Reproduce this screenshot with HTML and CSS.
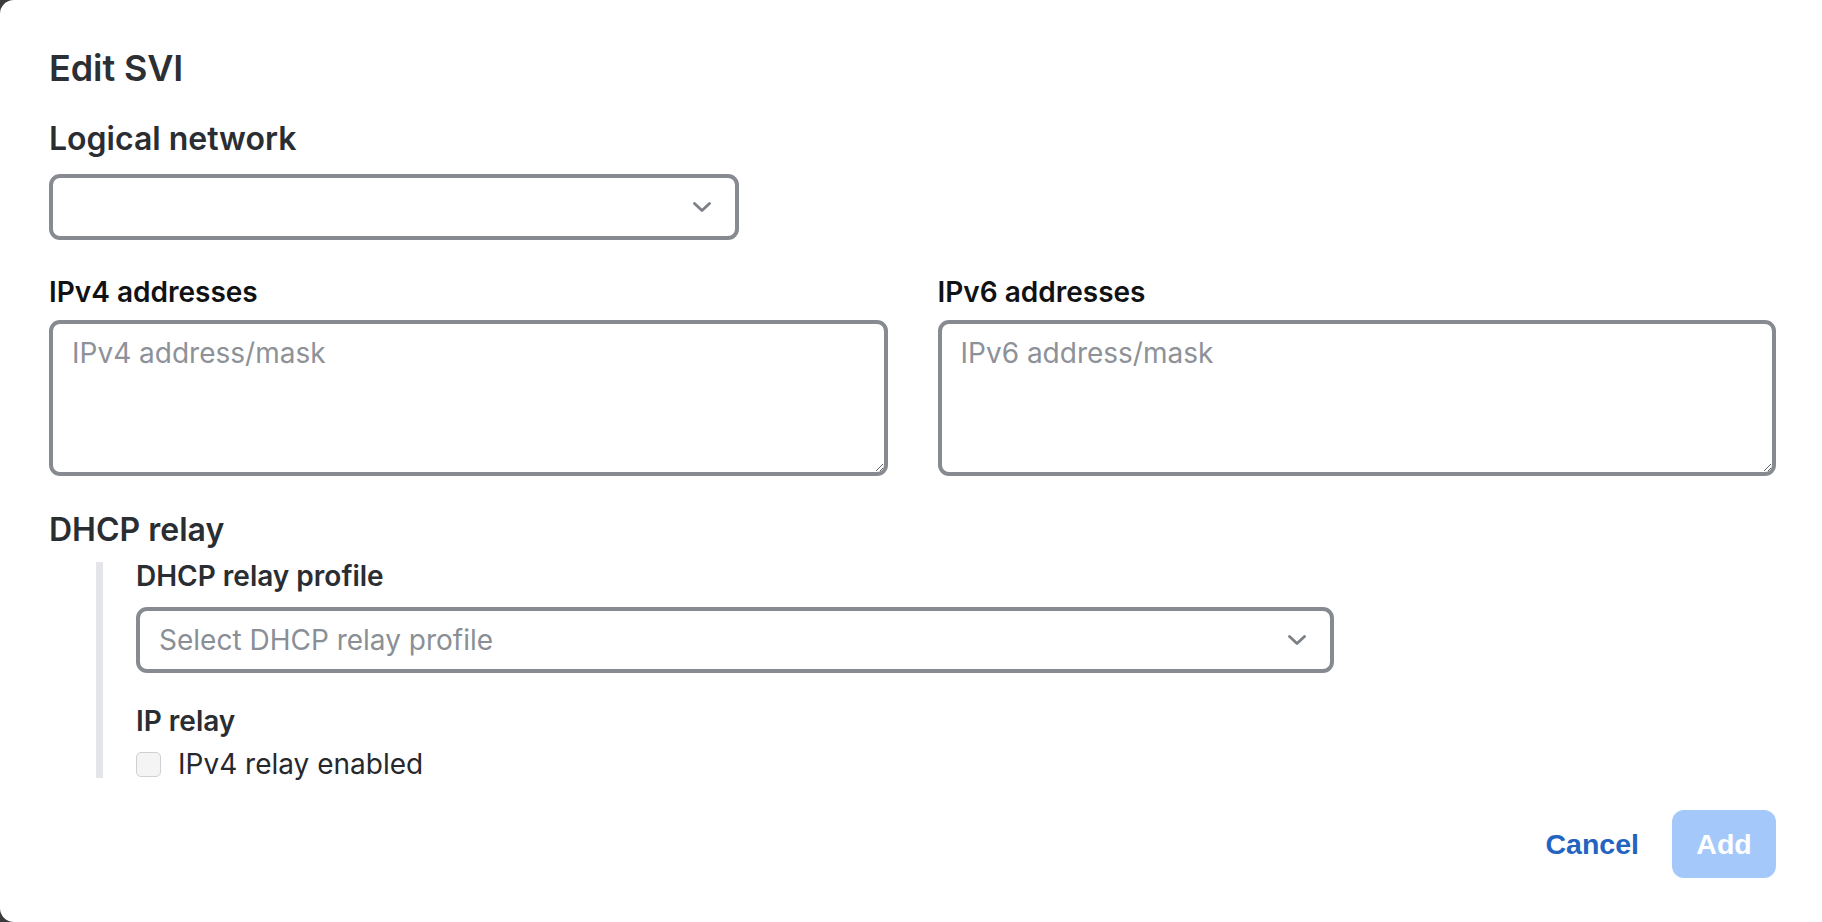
FILE: index.html
```html
<!DOCTYPE html>
<html lang="en">
<head>
<meta charset="utf-8">
<title>Edit SVI</title>
<link rel="stylesheet" href="styles.css">
</head>
<body>
<div class="dialog">
  <h1 class="title">Edit SVI</h1>

  <div class="section-label">Logical network</div>
  <div class="select select-short">
    <span class="select-value"></span>
    <svg class="chev" width="18" height="10" viewBox="0 0 18 10"><path d="M1.5 1.5 L9 8.5 L16.5 1.5" fill="none" stroke="#7b8087" stroke-width="2.8" stroke-linecap="round" stroke-linejoin="round"/></svg>
  </div>

  <div class="addr-grid">
    <div class="addr-col">
      <label class="field-label" for="v4">IPv4 addresses</label>
      <textarea id="v4" class="addr-input" placeholder="IPv4 address/mask"></textarea>
    </div>
    <div class="addr-col">
      <label class="field-label" for="v6">IPv6 addresses</label>
      <textarea id="v6" class="addr-input" placeholder="IPv6 address/mask"></textarea>
    </div>
  </div>

  <div class="section-label dhcp-heading">DHCP relay</div>
  <div class="nested">
    <div class="sub-label first">DHCP relay profile</div>
    <div class="select select-long">
      <span class="select-placeholder">Select DHCP relay profile</span>
      <svg class="chev" width="18" height="10" viewBox="0 0 18 10"><path d="M1.5 1.5 L9 8.5 L16.5 1.5" fill="none" stroke="#7b8087" stroke-width="2.8" stroke-linecap="round" stroke-linejoin="round"/></svg>
    </div>
    <div class="sub-label ip-relay">IP relay</div>
    <label class="check-row">
      <span class="checkbox"></span>
      <span class="check-text">IPv4 relay enabled</span>
    </label>
  </div>

  <div class="footer">
    <button class="btn-cancel" type="button">Cancel</button>
    <button class="btn-add" type="button">Add</button>
  </div>
</div>
</body>
</html>
```

FILE: styles.css
```css
* { box-sizing: border-box; }
html, body { margin: 0; padding: 0; }
body {
  background: #3a3b3d;
  width: 1822px;
  height: 922px;
  overflow: hidden;
  font-family: Inter, "Noto Sans", sans-serif;
}
.dialog {
  background: #ffffff;
  width: 1822px;
  height: 922px;
  padding: 46px 46px 0 49px;
  border-top-left-radius: 14px;
  border-bottom-left-radius: 14px;
}
.title {
  margin: 0;
  font-size: 36px;
  line-height: 44px;
  font-weight: 600;
  color: #2c2f34;
  letter-spacing: -0.1px;
}
.section-label {
  margin-top: 29px;
  font-size: 32px;
  line-height: 40px;
  font-weight: 600;
  color: #2a2d32;
}
.select {
  margin-top: 15px;
  height: 66px;
  border: 4px solid #878b91;
  border-radius: 11px;
  display: flex;
  align-items: center;
  justify-content: space-between;
  padding: 0 24px 0 19px;
  background: #fff;
}
.select-short { width: 690px; }
.select-long { width: 1198px; margin-top: 17px; }
.select-placeholder {
  font-size: 28px;
  color: #8a8f96;
}
.chev { display: block; flex: none; }
.addr-grid {
  margin-top: 34px;
  display: grid;
  grid-template-columns: 1fr 1fr;
  column-gap: 50px;
}
.addr-col { display: flex; flex-direction: column; }
.field-label {
  font-size: 28px;
  line-height: 36px;
  font-weight: 600;
  color: #111214;
}
.addr-input {
  margin-top: 10px;
  height: 156px;
  border: 4px solid #878b91;
  border-radius: 11px;
  padding: 11px 19px;
  font-family: Inter, "Noto Sans", sans-serif;
  font-size: 28px;
  line-height: 36px;
  color: #2a2d32;
  resize: both;
  outline: none;
}
.addr-input::placeholder { color: #8d9198; }
.dhcp-heading { margin-top: 34px; }
.nested {
  margin-top: 12px;
  margin-left: 47px;
  border-left: 7px solid #e4e5ea;
  padding-left: 33px;
}
.sub-label {
  font-size: 28px;
  line-height: 28px;
  font-weight: 600;
  color: #2a2d32;
}
.ip-relay { margin-top: 34px; }
.check-row {
  margin-top: 15px;
  display: flex;
  align-items: center;
  height: 28px;
}
.checkbox {
  width: 25px;
  height: 25px;
  border: 1.5px solid #cdd0d4;
  border-radius: 5px;
  background: #f4f4f5;
  flex: none;
}
.check-text {
  margin-left: 17px;
  font-size: 28px;
  line-height: 28px;
  color: #26282c;
}
.footer {
  margin-top: 32px;
  display: flex;
  justify-content: flex-end;
  align-items: center;
}
.btn-cancel, .btn-add {
  font-family: "Liberation Sans", Arial, sans-serif;
  font-weight: 700;
  font-size: 28.5px;
  border: none;
  cursor: pointer;
}
.btn-cancel {
  background: none;
  color: #2363c1;
  padding: 0;
  margin-right: 33px;
}
.btn-add {
  background: #a5c8fb;
  color: #ffffff;
  width: 104px;
  height: 68px;
  border-radius: 12px;
  padding: 0;
}
```
